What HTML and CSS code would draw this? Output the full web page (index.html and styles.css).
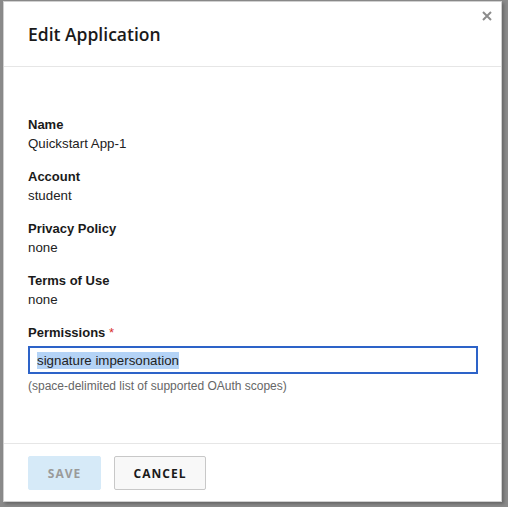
FILE: index.html
```html
<!DOCTYPE html>
<html>
<head>
<meta charset="utf-8">
<link rel="stylesheet" href="styles.css">
</head>
<body>
<div class="modal">
  <div class="modal-header">
    <h1 class="title">Edit Application</h1>
    <svg class="close" width="10" height="10" viewBox="0 0 10 10" aria-label="Close">
      <path d="M1 1 L9 9 M9 1 L1 9" stroke="#8c8c8c" stroke-width="2" fill="none"/>
    </svg>
  </div>
  <div class="modal-body">
    <div class="field">
      <div class="label">Name</div>
      <div class="value">Quickstart App-1</div>
    </div>
    <div class="field">
      <div class="label">Account</div>
      <div class="value">student</div>
    </div>
    <div class="field">
      <div class="label">Privacy Policy</div>
      <div class="value">none</div>
    </div>
    <div class="field">
      <div class="label">Terms of Use</div>
      <div class="value">none</div>
    </div>
    <div class="field">
      <div class="label">Permissions <span class="req">*</span></div>
      <div class="input"><span class="sel">signature impersonation</span></div>
      <div class="help">(space-delimited list of supported OAuth scopes)</div>
    </div>
  </div>
  <div class="modal-footer">
    <button class="btn btn-save">SAVE</button>
    <button class="btn btn-cancel">CANCEL</button>
  </div>
</div>
</body>
</html>
```
FILE: styles.css
```css
html, body {
  margin: 0;
  height: 100%;
}
body {
  background: #8a8a8a;
  padding: 1px 0 0 3px;
  box-sizing: border-box;
  font-family: "Liberation Sans", Arial, sans-serif;
  color: #222;
}
.modal {
  width: 499px;
  height: 501px;
  background: #fff;
  border: 1px solid #d0d0d0;
  box-sizing: border-box;
  display: flex;
  flex-direction: column;
  box-shadow: 2px 2px 3px rgba(0,0,0,0.25);
}
.modal-header {
  position: relative;
  height: 64px;
  border-bottom: 1px solid #e6e6e6;
  display: flex;
  align-items: center;
  padding: 0 24px;
  flex: none;
}
.title {
  margin: 0;
  font-family: "Open Sans", sans-serif;
  font-weight: 600;
  font-size: 17.5px;
  color: #1a1a1a;
}
.close {
  position: absolute;
  right: 9px;
  top: 9px;
}
.modal-body {
  flex: 1;
  padding: 48px 24px 0;
}
.field {
  margin-bottom: 14px;
  font-size: 13px;
  line-height: 19px;
}
.label {
  font-weight: bold;
  color: #1a1a1a;
}
.value {
  color: #222;
  font-size: 13.3px;
}
.req {
  color: #d9302c;
  font-weight: normal;
}
.input {
  margin-top: 4px;
  height: 28px;
  border: 2px solid #2d63c8;
  box-sizing: border-box;
  padding: 0 7px;
  display: flex;
  align-items: center;
  font-size: 13.3px;
  color: #222;
  width: 450px;
}
.sel {
  background: #b4d3f6;
  line-height: 17px;
}
.help {
  margin-top: 4px;
  font-size: 12px;
  color: #666;
  line-height: 17px;
}
.modal-footer {
  flex: none;
  height: 58px;
  border-top: 1px solid #e6e6e6;
  box-sizing: border-box;
  display: flex;
  align-items: center;
  gap: 13px;
  padding: 0 24px;
}
.btn {
  height: 34px;
  font-family: "Open Sans", sans-serif;
  font-weight: 700;
  font-size: 12px;
  letter-spacing: 1px;
  border-radius: 2px;
  padding: 1px 0 0;
}
.btn-save {
  width: 73px;
  background: #d6eaf8;
  border: 1px solid #d6eaf8;
  color: #9a9a9a;
}
.btn-cancel {
  width: 92px;
  background: #f8f8f8;
  border: 1px solid #c8c8c8;
  color: #1a1a1a;
}
```
